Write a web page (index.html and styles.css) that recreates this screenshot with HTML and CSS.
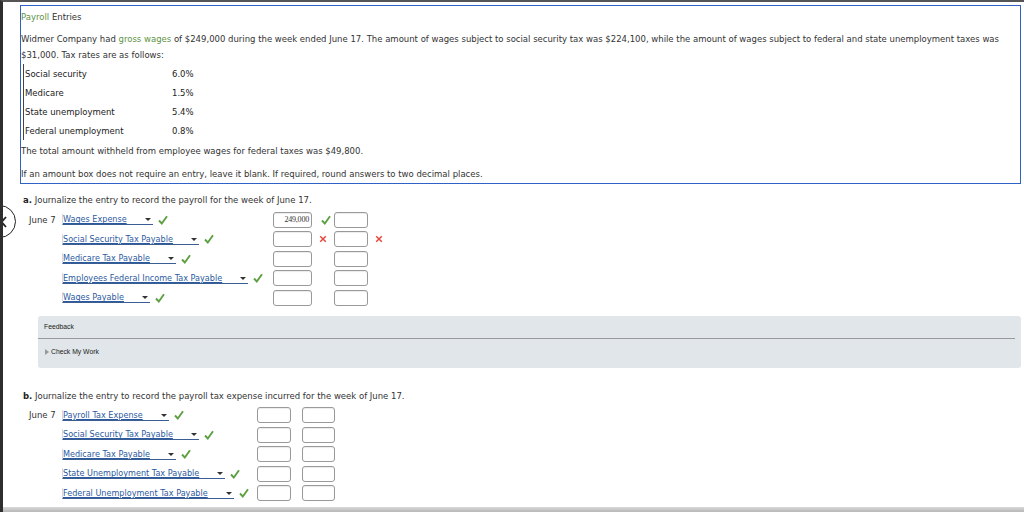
FILE: index.html
```html
<!DOCTYPE html>
<html>
<head>
<meta charset="utf-8">
<link rel="stylesheet" href="styles.css">
</head>
<body>
<div class="screen">
  <div class="problem">
    <div class="title"><span class="green">Payroll</span> Entries</div>
    <p class="para">Widmer Company had <span class="green">gross wages</span> of $249,000 during the week ended June 17. The amount of wages subject to social security tax was $224,100, while the amount of wages subject to federal and state unemployment taxes was $31,000. Tax rates are as follows:</p>
    <div class="rates">
      <div class="rate"><span class="rname">Social security</span><span>6.0%</span></div>
      <div class="rate"><span class="rname">Medicare</span><span>1.5%</span></div>
      <div class="rate"><span class="rname">State unemployment</span><span>5.4%</span></div>
      <div class="rate"><span class="rname">Federal unemployment</span><span>0.8%</span></div>
    </div>
    <p class="line l1">The total amount withheld from employee wages for federal taxes was $49,800.</p>
    <p class="line l2">If an amount box does not require an entry, leave it blank. If required, round answers to two decimal places.</p>
  </div>

  <div class="circle"><svg width="8" height="12" viewBox="0 0 8 12"><path d="M6 1 L1.5 6 L6 11" fill="none" stroke="#222" stroke-width="1.8"/></svg></div>

  <div class="part">
    <div class="heading"><b>a.</b> Journalize the entry to record the payroll for the week of June 17.</div>
    <div class="journal ja">
      <div class="row">
        <span class="date">June 7</span>
        <span class="acct"><span class="sel">Wages Expense<i class="arrow"></i></span><svg class="chk" viewBox="0 0 10 10"><path d="M1 5.5 L3.8 8.5 L9 1.2"/></svg></span>
        <span class="box b1 filled">249,000</span>
        <span class="mark"><svg class="chk" viewBox="0 0 10 10"><path d="M1 5.5 L3.8 8.5 L9 1.2"/></svg></span>
        <span class="box b2"></span>
        <span class="mark"></span>
      </div>
      <div class="row">
        <span class="date"></span>
        <span class="acct"><span class="sel">Social Security Tax Payable<i class="arrow"></i></span><svg class="chk" viewBox="0 0 10 10"><path d="M1 5.5 L3.8 8.5 L9 1.2"/></svg></span>
        <span class="box b1"></span>
        <span class="mark"><svg class="xm" viewBox="0 0 10 10"><path d="M1.5 1.5 L8.5 8.5 M8.5 1.5 L1.5 8.5"/></svg></span>
        <span class="box b2"></span>
        <span class="mark"><svg class="xm" viewBox="0 0 10 10"><path d="M1.5 1.5 L8.5 8.5 M8.5 1.5 L1.5 8.5"/></svg></span>
      </div>
      <div class="row">
        <span class="date"></span>
        <span class="acct"><span class="sel">Medicare Tax Payable<i class="arrow"></i></span><svg class="chk" viewBox="0 0 10 10"><path d="M1 5.5 L3.8 8.5 L9 1.2"/></svg></span>
        <span class="box b1"></span>
        <span class="mark"></span>
        <span class="box b2"></span>
        <span class="mark"></span>
      </div>
      <div class="row">
        <span class="date"></span>
        <span class="acct"><span class="sel">Employees Federal Income Tax Payable<i class="arrow"></i></span><svg class="chk" viewBox="0 0 10 10"><path d="M1 5.5 L3.8 8.5 L9 1.2"/></svg></span>
        <span class="box b1"></span>
        <span class="mark"></span>
        <span class="box b2"></span>
        <span class="mark"></span>
      </div>
      <div class="row">
        <span class="date"></span>
        <span class="acct"><span class="sel">Wages Payable<i class="arrow"></i></span><svg class="chk" viewBox="0 0 10 10"><path d="M1 5.5 L3.8 8.5 L9 1.2"/></svg></span>
        <span class="box b1"></span>
        <span class="mark"></span>
        <span class="box b2"></span>
        <span class="mark"></span>
      </div>
    </div>
  </div>

  <div class="feedback">
    <div class="fb-title">Feedback</div>
    <div class="fb-rule"></div>
    <div class="fb-check"><i class="tri"></i>Check My Work</div>
  </div>

  <div class="part partb">
    <div class="heading"><b>b.</b> Journalize the entry to record the payroll tax expense incurred for the week of June 17.</div>
    <div class="journal jb">
      <div class="row">
        <span class="date">June 7</span>
        <span class="acct"><span class="sel">Payroll Tax Expense<i class="arrow"></i></span><svg class="chk" viewBox="0 0 10 10"><path d="M1 5.5 L3.8 8.5 L9 1.2"/></svg></span>
        <span class="box b1"></span>
        <span class="gap"></span>
        <span class="box b2"></span>
      </div>
      <div class="row">
        <span class="date"></span>
        <span class="acct"><span class="sel">Social Security Tax Payable<i class="arrow"></i></span><svg class="chk" viewBox="0 0 10 10"><path d="M1 5.5 L3.8 8.5 L9 1.2"/></svg></span>
        <span class="box b1"></span>
        <span class="gap"></span>
        <span class="box b2"></span>
      </div>
      <div class="row">
        <span class="date"></span>
        <span class="acct"><span class="sel">Medicare Tax Payable<i class="arrow"></i></span><svg class="chk" viewBox="0 0 10 10"><path d="M1 5.5 L3.8 8.5 L9 1.2"/></svg></span>
        <span class="box b1"></span>
        <span class="gap"></span>
        <span class="box b2"></span>
      </div>
      <div class="row">
        <span class="date"></span>
        <span class="acct"><span class="sel">State Unemployment Tax Payable<i class="arrow"></i></span><svg class="chk" viewBox="0 0 10 10"><path d="M1 5.5 L3.8 8.5 L9 1.2"/></svg></span>
        <span class="box b1"></span>
        <span class="gap"></span>
        <span class="box b2"></span>
      </div>
      <div class="row">
        <span class="date"></span>
        <span class="acct"><span class="sel">Federal Unemployment Tax Payable<i class="arrow"></i></span><svg class="chk" viewBox="0 0 10 10"><path d="M1 5.5 L3.8 8.5 L9 1.2"/></svg></span>
        <span class="box b1"></span>
        <span class="gap"></span>
        <span class="box b2"></span>
      </div>
    </div>
  </div>

  <div class="bottombar"></div>
</div>
</body>
</html>
```

FILE: styles.css
```css
* { box-sizing: border-box; }
html, body { margin: 0; padding: 0; background: #fff; }
body {
  font-family: "DejaVu Sans", Verdana, sans-serif;
  font-size: 8.5px;
  color: #333;
  overflow: hidden;
}
.screen {
  position: relative;
  width: 1024px;
  height: 512px;
  border-top: 2px solid #555;
  border-left: 3px solid #2e2e2e;
  display: flex;
  flex-direction: column;
  overflow: hidden;
}
p { margin: 0; }
.green { color: #5e9345; }

.problem {
  margin: 3px 0 0 17px;
  width: 1001px;
  border: 1px solid #2f62c6;
  padding: 3px 0 1px 0;
}
.title { line-height: 16px; }
.para { margin-top: 6px; line-height: 16px; padding-right: 8px; }
.rates {
  margin: 1px 0 0 2px;
  border-left: 1px solid #444;
}
.rate { display: flex; height: 19px; align-items: center; color: #222; }
.rname { width: 148px; padding-left: 1px; }
.line { line-height: 16px; }
.l1 { margin-top: 3px; }
.l2 { margin-top: 7px; }

.circle {
  position: absolute;
  left: -20px;
  top: 203px;
  width: 33px;
  height: 33px;
  border: 1.5px solid #222;
  border-radius: 50%;
  background: #fff;
  display: flex;
  align-items: center;
  justify-content: flex-end;
  padding-right: 7px;
}

.part { margin-left: 20px; }
.heading { margin-top: 8px; line-height: 16px; color: #333; }
.heading b { color: #222; }
.journal { margin-top: 2px; padding-left: 6px; }
.row { display: flex; align-items: center; height: 19.5px; }
.date { width: 33px; color: #333; }
.acct { display: flex; align-items: center; }
.ja .acct { width: 211px; }
.jb .acct { width: 195px; }
.sel {
  display: inline-flex;
  align-items: flex-end;
  font-size: 8.1px;
  color: #2c5a9e;
  text-decoration: underline;
  text-underline-offset: 1px;
  border-bottom: 1.5px solid #3a5d92;
  border-left: 1px solid #d3d9e3;
  line-height: 10px;
  padding-right: 2px;
}
.arrow {
  display: inline-block;
  width: 0; height: 0;
  margin: 0 0 3px 18px;
  border-left: 3px solid transparent;
  border-right: 3px solid transparent;
  border-top: 3.5px solid #333;
}
.chk { width: 10px; height: 10px; margin-left: 5px; flex: none; }
.chk path { fill: none; stroke: #5da042; stroke-width: 1.9; }
.xm { width: 8px; height: 8px; }
.xm path { fill: none; stroke: #e5483d; stroke-width: 1.9; }

.box {
  height: 16px;
  border: 1px solid #999;
  border-radius: 3px;
  background: #fff;
  box-shadow: inset 0 1px 1px rgba(0,0,0,0.08);
  flex: none;
}
.ja .b1 { width: 39px; }
.ja .b2 { width: 34px; }
.jb .b1 { width: 34px; }
.jb .b2 { width: 33px; }
.filled {
  font-family: "Liberation Serif", "Times New Roman", serif;
  font-size: 8px;
  letter-spacing: -0.2px;
  text-align: right;
  padding-right: 2px;
  line-height: 14px;
  color: #333;
}
.mark { width: 22px; display: flex; justify-content: center; align-items: center; }
.gap { width: 11px; }

.feedback {
  margin: 8px 0 0 35px;
  width: 983px;
  height: 52px;
  background: #e0e6ea;
  border-radius: 3px;
  font-family: "Liberation Sans", Arial, sans-serif;
  font-size: 6.8px;
  color: #222;
  padding-top: 6px;
}
.fb-title { padding-left: 6px; line-height: 10px; }
.fb-rule { margin: 6px 6px 0 0; border-top: 1px solid #999; }
.fb-check { padding-left: 7px; margin-top: 8px; line-height: 10px; display: flex; align-items: center; }
.tri {
  display: inline-block;
  width: 0; height: 0;
  border-top: 3px solid transparent;
  border-bottom: 3px solid transparent;
  border-left: 4px solid #999;
  margin-right: 2px;
}
.partb .heading { margin-top: 20px; }

.bottombar {
  margin-top: auto;
  height: 5px;
  background: linear-gradient(#d8d8d8, #b8b8b8);
}
```
